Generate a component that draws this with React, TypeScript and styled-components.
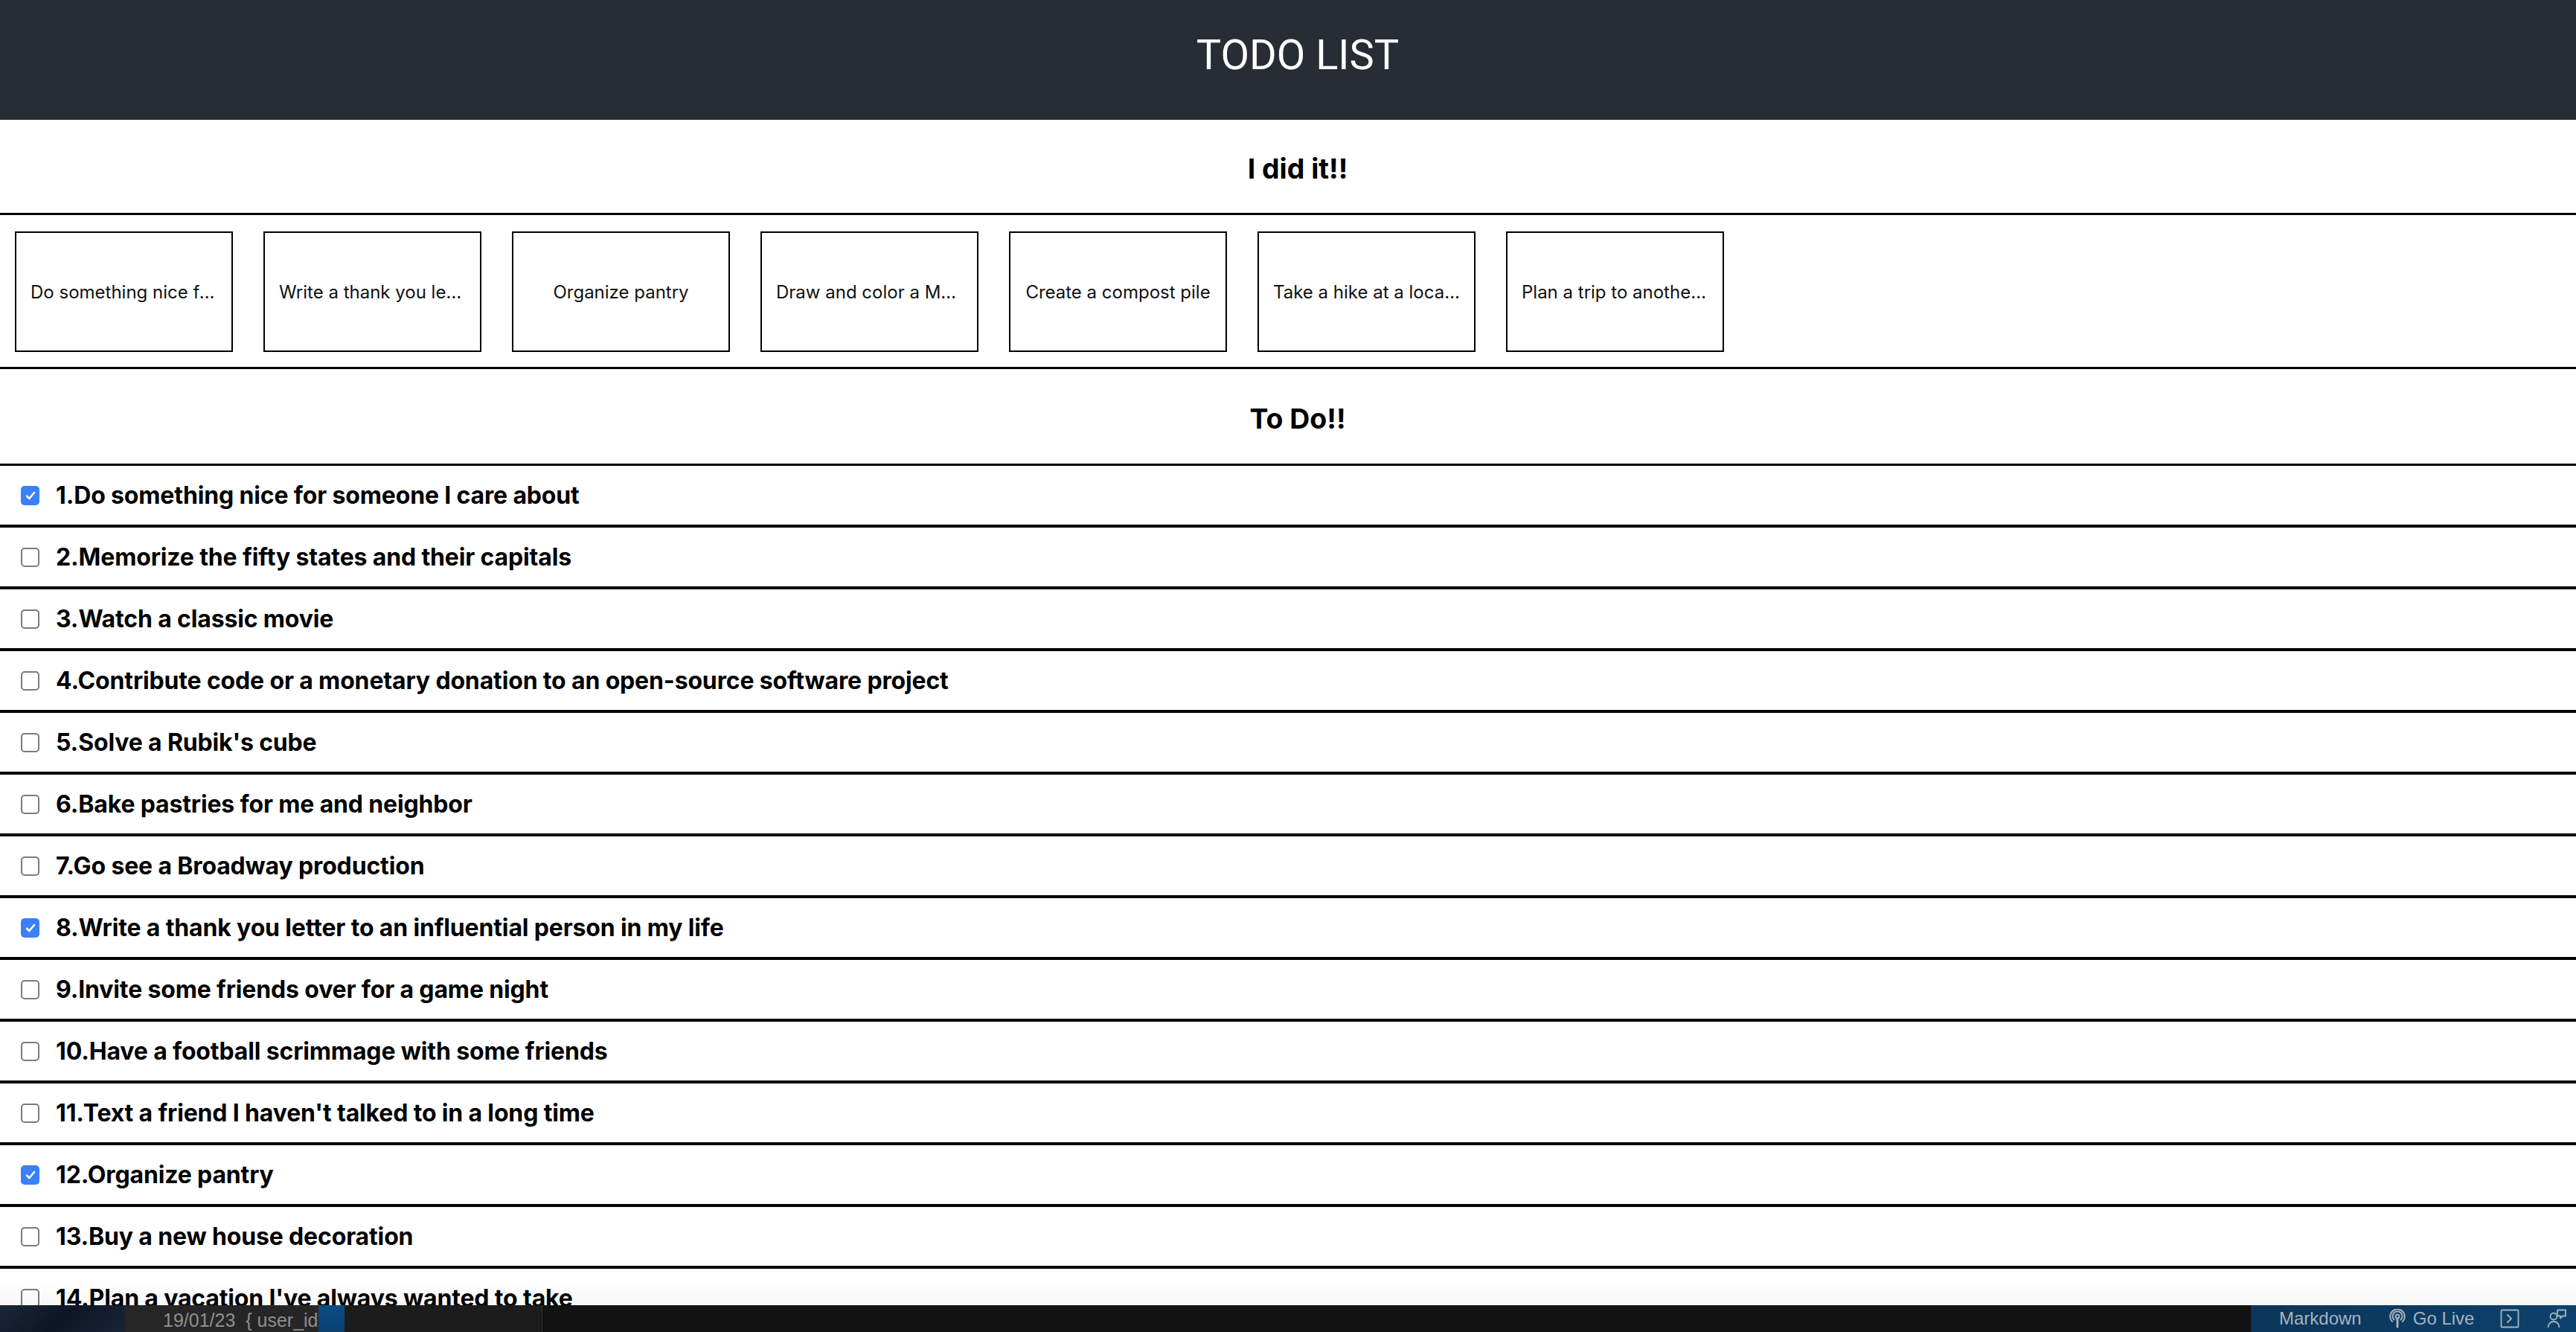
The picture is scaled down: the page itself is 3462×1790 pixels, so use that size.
import React from "react";
import styled, { createGlobalStyle } from "styled-components";

const GlobalStyle = createGlobalStyle`
  html, body {
    margin: 0;
    padding: 0;
    background: #ffffff;
    overflow: hidden;
  }
  body {
    font-family: Inter, "Noto Sans", "Liberation Sans", sans-serif;
    color: #000;
  }
  ::-webkit-scrollbar { display: none; }
`;

const Page = styled.div`
  display: flex;
  flex-direction: column;
  min-height: 100vh;
`;

const Header = styled.header`
  height: 161px;
  background: #282c34;
  display: flex;
  align-items: center;
  justify-content: center;
  padding: 0 0 14px 26px;
  box-sizing: border-box;
`;

const Title = styled.h1`
  margin: 0;
  font-family: Roboto, "Liberation Sans", sans-serif;
  font-weight: 400;
  font-size: 56px;
  color: #ffffff;
  letter-spacing: 0;
`;

const SectionTitle = styled.h3<{ $h: number }>`
  margin: 0;
  height: ${(p) => p.$h}px;
  box-sizing: border-box;
  border-bottom: 3px solid #000;
  display: flex;
  align-items: center;
  justify-content: center;
  padding: 6px 0 0 26px;
  font-family: Inter, "Noto Sans", sans-serif;
  font-weight: 700;
  font-size: 37.44px;
  color: #000;
`;

const CardRow = styled.section`
  display: flex;
  gap: 41px;
  padding: 22px 20px 20px;
  border-bottom: 3px solid #000;
`;

const Card = styled.div`
  width: 293px;
  height: 162px;
  flex: none;
  box-sizing: border-box;
  border: 2px solid #000;
  display: flex;
  align-items: center;
  justify-content: center;
  padding: 0 19px;
`;

const CardText = styled.span`
  display: block;
  max-width: 100%;
  white-space: nowrap;
  overflow: hidden;
  text-overflow: ellipsis;
  font-family: Inter, "Noto Sans", sans-serif;
  font-size: 24px;
  font-weight: 400;
  color: #111;
`;

const List = styled.ul`
  margin: 0;
  padding: 0;
  list-style: none;
`;

const Row = styled.li`
  height: 83px;
  box-sizing: border-box;
  border-bottom: 4px solid #000;
  display: flex;
  align-items: center;
  gap: 22px;
  padding-left: 28px;
`;

const Box = styled.span<{ $checked: boolean }>`
  width: 25px;
  height: 26px;
  flex: none;
  box-sizing: border-box;
  border-radius: 5px;
  display: flex;
  align-items: center;
  justify-content: center;
  background: ${(p) => (p.$checked ? "#3a80f6" : "#ffffff")};
  border: ${(p) => (p.$checked ? "none" : "2px solid #7b7b7b")};
`;

const ItemText = styled.span`
  font-family: Inter, "Noto Sans", sans-serif;
  font-weight: 700;
  font-size: 32px;
  color: #000;
  letter-spacing: -0.15px;
`;

const DesktopBar = styled.div`
  position: fixed;
  left: 0;
  right: 0;
  bottom: 0;
  height: 36px;
  display: flex;
  background: #141414;
  font-family: "Liberation Sans", Arial, sans-serif;
`;

const Shade = styled.div`
  position: fixed;
  left: 0;
  right: 0;
  bottom: 36px;
  height: 34px;
  background: linear-gradient(to bottom, rgba(0, 0, 0, 0), rgba(0, 0, 0, 0.03));
  pointer-events: none;
`;

const Wallpaper = styled.div`
  width: 168px;
  flex: none;
  background: linear-gradient(135deg, #1a2638 0%, #0e1624 50%, #182437 100%);
`;

const EditorTab = styled.div`
  width: 260px;
  flex: none;
  background: #262626;
  color: #8f8f8f;
  font-size: 25px;
  padding-left: 51px;
  box-sizing: border-box;
  white-space: nowrap;
  overflow: hidden;
  display: flex;
  align-items: flex-end;
  padding-bottom: 1px;
`;

const Selection = styled.div`
  width: 35px;
  flex: none;
  background: linear-gradient(to bottom, #0b4d86, #0a3f6e);
`;

const EditorPane = styled.div`
  width: 265px;
  flex: none;
  background: #1c1c1c;
  border-right: 1px solid #333;
`;

const Spacer = styled.div`
  flex: 1;
  background: #121212;
`;

const StatusBar = styled.div`
  width: 437px;
  flex: none;
  background: linear-gradient(to right, #0b355a, #0c416d);
  display: flex;
  align-items: center;
  color: #a8b3bd;
  font-family: "Liberation Sans", Arial, sans-serif;
  font-size: 24px;
  padding-left: 38px;
  box-sizing: border-box;
`;

const StatusItem = styled.span<{ $ml?: number }>`
  display: flex;
  align-items: center;
  gap: 10px;
  margin-left: ${(p) => p.$ml ?? 0}px;
  white-space: nowrap;
`;

const done = [
  "Do something nice for someone I care about",
  "Write a thank you letter to an influential person in my life",
  "Organize pantry",
  "Draw and color a Mandala",
  "Create a compost pile",
  "Take a hike at a local park",
  "Plan a trip to another country",
];

const todos: { text: string; done: boolean }[] = [
  { text: "Do something nice for someone I care about", done: true },
  { text: "Memorize the fifty states and their capitals", done: false },
  { text: "Watch a classic movie", done: false },
  { text: "Contribute code or a monetary donation to an open-source software project", done: false },
  { text: "Solve a Rubik's cube", done: false },
  { text: "Bake pastries for me and neighbor", done: false },
  { text: "Go see a Broadway production", done: false },
  { text: "Write a thank you letter to an influential person in my life", done: true },
  { text: "Invite some friends over for a game night", done: false },
  { text: "Have a football scrimmage with some friends", done: false },
  { text: "Text a friend I haven't talked to in a long time", done: false },
  { text: "Organize pantry", done: true },
  { text: "Buy a new house decoration", done: false },
  { text: "Plan a vacation I've always wanted to take", done: false },
  { text: "Clean out car", done: false },
  { text: "Draw and color a Mandala", done: true },
];

const Check = () => (
  <svg width="16" height="16" viewBox="0 0 16 16" fill="none">
    <path d="M3 8.6 L6.4 12 L13 4" stroke="#fff" strokeWidth="2.6" strokeLinecap="round" strokeLinejoin="round" />
  </svg>
);

const Broadcast = () => (
  <svg width="22" height="26" viewBox="0 0 22 26" fill="none" stroke="#a8b3bd" strokeWidth="2" strokeLinecap="round">
    <circle cx="11" cy="10" r="2.5" />
    <path d="M6.5 14.5a6.5 6.5 0 1 1 9 0" />
    <path d="M4 17a9.8 9.8 0 1 1 14 0" />
    <path d="M11 13v11" strokeWidth="3" />
  </svg>
);

const TermBox = () => (
  <svg width="26" height="26" viewBox="0 0 26 26" fill="none" stroke="#a8b3bd" strokeWidth="1.8">
    <rect x="1.5" y="1.5" width="23" height="23" rx="1" />
    <path d="M10 8l5 5-5 5" strokeLinecap="round" strokeLinejoin="round" />
  </svg>
);

const Feedback = () => (
  <svg width="26" height="26" viewBox="0 0 26 26" fill="none" stroke="#a8b3bd" strokeWidth="1.8" strokeLinejoin="round">
    <circle cx="9" cy="10" r="4.5" />
    <path d="M1.5 25c0-5 3.3-8 7.5-8s7.5 3 7.5 8" />
    <path d="M14 1.5h11v8h-4l-3 3v-3h-4z" />
  </svg>
);

export default function App() {
  return (
    <Page>
      <GlobalStyle />
      <Header>
        <Title>TODO LIST</Title>
      </Header>
      <SectionTitle $h={128}>I did it!!</SectionTitle>
      <CardRow>
        {done.map((t) => (
          <Card key={t} title={t}>
            <CardText>{t}</CardText>
          </Card>
        ))}
      </CardRow>
      <SectionTitle $h={130}>To Do!!</SectionTitle>
      <List>
        {todos.map((t, i) => (
          <Row key={t.text}>
            <Box $checked={t.done} role="checkbox" aria-checked={t.done}>
              {t.done && <Check />}
            </Box>
            <ItemText>
              {i + 1}.{t.text}
            </ItemText>
          </Row>
        ))}
      </List>
      <Shade />
      <DesktopBar>
        <Wallpaper />
        <EditorTab>19/01/23&nbsp;&nbsp;{"{"} user_id</EditorTab>
        <Selection />
        <EditorPane />
        <Spacer />
        <StatusBar>
          <StatusItem>Markdown</StatusItem>
          <StatusItem $ml={37}>
            <Broadcast />
            Go Live
          </StatusItem>
          <StatusItem $ml={35}>
            <TermBox />
          </StatusItem>
          <StatusItem $ml={37}>
            <Feedback />
          </StatusItem>
        </StatusBar>
      </DesktopBar>
    </Page>
  );
}
